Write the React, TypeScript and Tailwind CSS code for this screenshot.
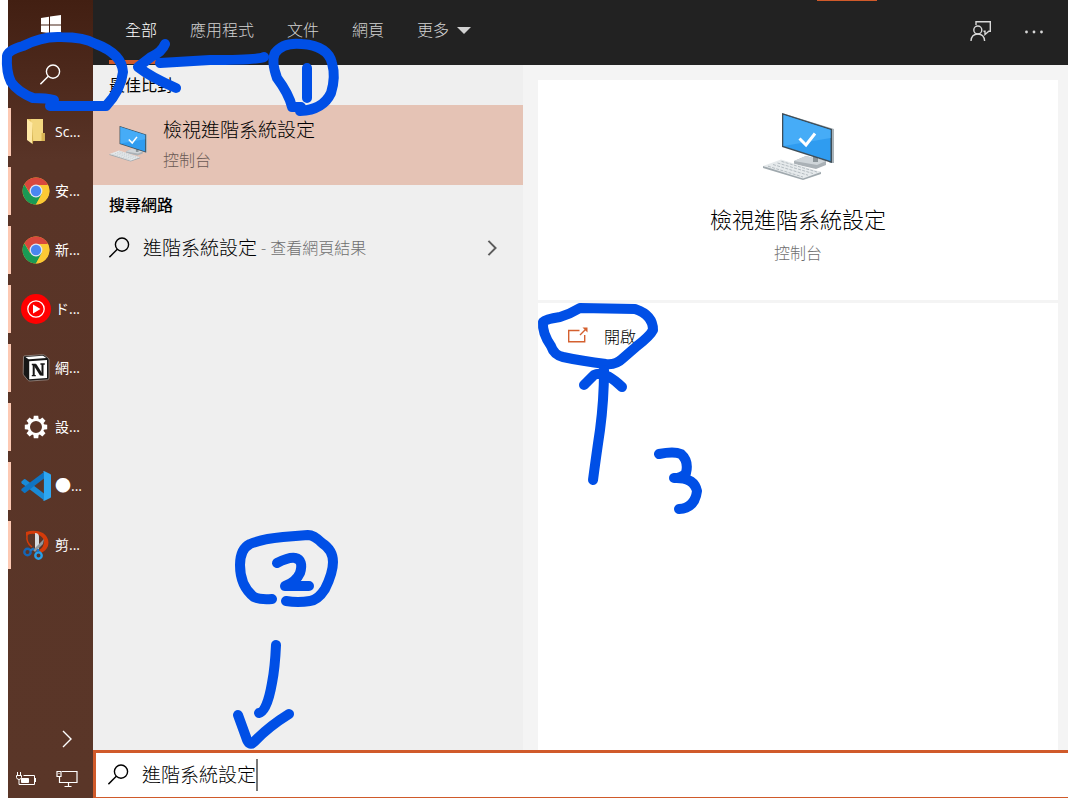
import React, { useState } from 'react';

type IconProps = { className?: string };

const WindowsIcon: React.FC<IconProps> = ({ className }) => (
  <svg viewBox="0 0 20 20" className={className} fill="#fff" aria-hidden="true">
    <path d="M0 3 8 1.8V9.4H0zM9 1.6 20 0v9.4H9zM0 10.4h8V18L0 16.9zM9 10.4h11V20L9 18.2z" />
  </svg>
);

const SearchIcon: React.FC<IconProps> = ({ className }) => (
  <svg viewBox="0 0 22 22" className={className} fill="none" stroke="currentColor" strokeWidth="1.4" aria-hidden="true">
    <circle cx="13" cy="7.6" r="6.6" />
    <path d="M8.300 12.300.4 20.200" />
  </svg>
);

const FolderIcon = () => (
  <svg viewBox="0 0 20 28" className="h-7 w-5" aria-hidden="true">
    <path d="M1 1h16v14h1.500v8H5z" fill="#e9c767" />
    <path d="M5 1h12v14h1.500v8H6z" fill="#f3d77f" />
    <path d="M15.500 15h3v8h-3z" fill="#d9b452" />
    <path d="M1 1l5.500 4v21L1 22z" fill="#ffe9a6" />
    <path d="M6.500 5 7.200 24 6 26.500z" fill="#d3b04f" />
  </svg>
);

const ChromeIcon = () => (
  <svg viewBox="0 0 48 48" className="h-7 w-7" aria-hidden="true">
    <circle cx="24" cy="24" r="23" fill="#fcc934" />
    <path d="M4.080 12.500A23 23 0 0 0 24 47L34 29.700 24 24 14 29.700z" fill="#1a9a55" />
    <path d="M24 13.500h20.400A23 23 0 0 1 24 47l9.500-17.500z" fill="#fcc934" />
    <path d="M24 13.500H44.400A23 23 0 0 0 4.080 12.500L14.500 29z" fill="#d9483d" />
    <circle cx="24" cy="24" r="11" fill="#dfe6f5" />
    <circle cx="24" cy="24" r="8.800" fill="#4a86f0" />
  </svg>
);

const MusicIcon = () => (
  <svg viewBox="0 0 30 30" className="h-[30px] w-[30px]" aria-hidden="true">
    <circle cx="15" cy="15" r="15" fill="#f00" />
    <circle cx="15" cy="15" r="8.200" fill="none" stroke="#fff" strokeWidth="1.300" />
    <path d="M12 10.500v9l7.500-4.500z" fill="#fff" />
  </svg>
);

const NotionIcon = () => (
  <svg viewBox="0 0 28 28" className="h-7 w-7" aria-hidden="true">
    <path d="M1.500 3Q1.500 2 2.500 1.900L20.500.7q1.200 0 2 .6L26 4q1 .8 1 2v18q0 1.700-1.700 1.800L8 27q-1.500 0-2.300-1L2 21.500q-.8-1-.8-2z" fill="#171717" stroke="#9b8d86" strokeWidth=".8" />
    <path d="M3.500 3 20.500 1.800q.8 0 1.300.4l2.400 1.700L7.500 5.200q-1 0-1.700-.5z" fill="#fff" />
    <path d="M7.200 7.200 25 6v18L7.200 25.200z" fill="#fff" />
    <path d="M11.700 10.500V21.500M20.500 10V21.500" stroke="#171717" strokeWidth="2" />
    <path d="M11 10.300h3.500l7 11.200h-3.500z" fill="#171717" />
    <path d="M9.800 10.500h4M18.400 10h4.400M9.800 21.700h4" stroke="#171717" strokeWidth="1.300" />
  </svg>
);

const GearIcon = () => (
  <svg viewBox="0 0 24 24" className="h-6 w-6" aria-hidden="true">
    <g fill="#fff">
      <path d="M9.800.8h4.400l.5 4H9.300z" />
      <path d="M9.800.8h4.400l.5 4H9.300z" transform="rotate(45 12 12)" />
      <path d="M9.800.8h4.400l.5 4H9.300z" transform="rotate(90 12 12)" />
      <path d="M9.800.8h4.400l.5 4H9.300z" transform="rotate(135 12 12)" />
      <path d="M9.800.8h4.400l.5 4H9.300z" transform="rotate(180 12 12)" />
      <path d="M9.800.8h4.400l.5 4H9.300z" transform="rotate(225 12 12)" />
      <path d="M9.800.8h4.400l.5 4H9.300z" transform="rotate(270 12 12)" />
      <path d="M9.800.8h4.400l.5 4H9.300z" transform="rotate(315 12 12)" />
    </g>
    <circle cx="12" cy="12" r="7.200" fill="none" stroke="#fff" strokeWidth="2.400" />
  </svg>
);

const CodeIcon = () => (
  <svg viewBox="0 0 30 30" className="h-[30px] w-[30px]" aria-hidden="true">
    <path d="M.5 10.500 3 8.300q.7-.4 1.400 0L23 22.500v6.700L.7 12.200q-.7-.7-.2-1.700z" fill="#1a8ad6" />
    <path d="M.5 19.500 3 21.700q.7.400 1.400 0L23 7.500V1L.7 17.800q-.7.800-.2 1.700z" fill="#0f74c2" />
    <path d="M22 .3q.8-.4 1.500 0l5.700 2.600q.8.500.8 1.400v21.400q0 .9-.8 1.400l-5.700 2.600q-.8.400-1.800-.3 1.200.2 1.200-1.200V1.800Q22.900.4 22 .3z" fill="#2ea7f2" />
  </svg>
);

const ScissorsIcon = () => (
  <svg viewBox="0 0 26 30" className="h-[30px] w-[26px]" aria-hidden="true">
    <path d="M3 2Q12-1 20 3q7 5 5 13-2 5-7 7l-2-3q5-3 5-8 0-5-6-7.500L12 4q-5-1-9 2z" fill="#d43b0a" />
    <path d="M4 5Q3 13 9 17" fill="none" stroke="#d43b0a" strokeWidth="1.500" />
    <path d="M12 3q4 0 4 4v13h-4z" fill="#d8dcdf" />
    <path d="M21 9l-1 5-8 8-2-2z" fill="#8f989e" />
    <circle cx="4.500" cy="22" r="3.200" fill="none" stroke="#1565b5" strokeWidth="2.400" />
    <circle cx="15.500" cy="25.500" r="3.200" fill="none" stroke="#28a0ea" strokeWidth="2.400" />
    <path d="M7 20.500 11 18.500M15 22v-3" stroke="#1c78c8" strokeWidth="2.400" />
  </svg>
);

const ComputerIcon: React.FC<IconProps> = ({ className }) => (
  <svg viewBox="0 0 72 68" className={className} aria-hidden="true">
    <path d="M32 48 44 43l20 5v4l-10 4-22-5z" fill="#aab1b6" />
    <path d="M32 48 44 43l20 5-9 4z" fill="#cfd5d9" />
    <path d="M51 42v7h5v-7z" fill="#8b9499" />
    <path d="M20 0 72 16v34L68 50z" fill="#a9b3b9" />
    <path d="M20 0 70 16v34L20 34z" fill="#3f4e58" />
    <path d="M21.500 2 68.500 17v31L21.500 33z" fill="#2f9cf0" />
    <path d="M21.500 2 68.500 17v8L21.500 33z" fill="#46acf7" />
    <path d="M37.500 25.500 44 32 53 20.500" fill="none" stroke="#fff" strokeWidth="3" />
    <path d="M1 53v2l40 12 18-6v-2z" fill="#a0a9ae" />
    <path d="M1 53 19 46.500 59 59l-18 6.500z" fill="#e6eaec" />
    <path d="M6 53.200 41 64M11 51.500 46 62.200M15.500 50 51 60.500M19.500 48.400 55 59" stroke="#b4bcc1" strokeWidth="1" strokeDasharray="3 1.300" />
  </svg>
);

const FeedbackIcon = () => (
  <svg viewBox="0 0 22 22" className="h-[22px] w-[22px]" fill="none" stroke="#d8d8d8" strokeWidth="1.400" aria-hidden="true">
    <path d="M6 4V.7h14.300v9.600h-1.500L15 13.500v-3.200h-1.500" />
    <circle cx="7.800" cy="9" r="4" />
    <path d="M1 20q.5-7 6.800-7t6.800 7" />
  </svg>
);

const OpenIcon = () => (
  <svg viewBox="0 0 20 20" className="h-5 w-5" fill="none" stroke="#d4602f" strokeWidth="1.400" aria-hidden="true">
    <path d="M11.500 3.500H.7v11.200h16V8M12 8 17.500 2.500" />
    <path d="M14.500.5h5v5z" fill="#d4602f" stroke="none" />
  </svg>
);

const ChevronIcon: React.FC<IconProps & { width?: number }> = ({ className, width = 1.4 }) => (
  <svg viewBox="0 0 10 18" className={className} fill="none" stroke="currentColor" strokeWidth={width} aria-hidden="true">
    <path d="M1 1l8 8-8 8" />
  </svg>
);

const PowerIcon = () => (
  <svg viewBox="0 0 20 14" className="h-3.5 w-5" fill="none" stroke="#fff" aria-hidden="true">
    <path d="M1.500 0v3M4.500 0v3M.5 3.500h5v2q-.5 2-2.500 2t-2.500-2zM3 7.500v5h15.500v-9H7.500M19.500 6v4" />
    <path d="M5.500 6.500h7v4h-7z" fill="#fff" />
  </svg>
);

const NetworkIcon = () => (
  <svg viewBox="0 0 22 18" className="h-[18px] w-[22px]" fill="none" stroke="#fff" strokeWidth="1.200" aria-hidden="true">
    <path d="M6 1.500h15v11H3.500V7M12.500 12.500v4M8.500 16.500h7M1 1.500h4v5H1zM2.500 3.500h1" />
  </svg>
);

const tasks = [
  { id: 'folder', label: 'Sc...', icon: <FolderIcon /> },
  { id: 'chrome', label: '安...', icon: <ChromeIcon /> },
  { id: 'chrome-new', label: '新...', icon: <ChromeIcon /> },
  { id: 'music', label: 'ド...', icon: <MusicIcon /> },
  { id: 'notion', label: '網...', icon: <NotionIcon /> },
  { id: 'settings', label: '設...', icon: <GearIcon /> },
  {
    id: 'code',
    label: (
      <>
        <span className="text-base leading-none">●</span>...
      </>
    ),
    icon: <CodeIcon />,
  },
  { id: 'snip', label: '剪...', icon: <ScissorsIcon /> },
];

const tabs = ['全部', '應用程式', '文件', '網頁'];

const Taskbar = () => (
  <aside className="flex w-[85px] shrink-0 flex-col bg-linear-to-b from-[#421f12] from-0% via-[#593427] via-20% to-[#5a3628]">
    <button className="flex h-[50px] items-center justify-center" aria-label="Start">
      <WindowsIcon className="h-5 w-5" />
    </button>
    <button className="flex h-[50px] items-center justify-center text-white" aria-label="Search">
      <SearchIcon className="h-[22px] w-[22px]" />
    </button>
    <nav className="mt-2 flex flex-col gap-[11px]">
      {tasks.map((task) => (
        <button key={task.id} className="flex h-12 items-center border-l-3 border-[#fdc9b3] text-sm font-normal text-white">
          <span className="ml-2 flex w-[34px] shrink-0 justify-center">{task.icon}</span>
          <span className="ml-0.5 whitespace-nowrap">{task.label}</span>
        </button>
      ))}
    </nav>
    <div className="mt-auto flex flex-col gap-[22px] pb-2.5 text-white">
      <button className="ml-[54px] w-2.5" aria-label="Show hidden icons">
        <ChevronIcon className="h-[18px] w-2.5" />
      </button>
      <div className="flex items-center gap-5 pl-2">
        <PowerIcon />
        <NetworkIcon />
      </div>
    </div>
  </aside>
);

// Hand-drawn steps laid over the window
const Annotations = () => (
  <svg
    className="pointer-events-none absolute top-0 left-0 h-[798px] w-[1068px]"
    viewBox="0 0 1068 798"
    fill="none"
    stroke="#004fe6"
    strokeWidth="10"
    strokeLinecap="round"
    strokeLinejoin="round"
    aria-hidden="true"
  >
    <path d="M54 100Q46 98 33 98Q18 92 11 82Q6 72 7 56Q8 50 23 46Q42 36 61 37Q84 37 96 44Q122 54 123 72Q121 90 106 106H50" />
    <path d="M264 57Q258 60 210 60L160 63M165 44Q162 52 151 57L138 67Q152 78 176 88" />
    <path d="M301 107H292Q289 94 277 78Q271 61 275 53Q283 42 302 44Q328 46 332 63Q336 77 331 93Q323 110 300 111M307 68V98" />
    <path d="M272 599Q260 600 254 597Q240 586 240 565Q240 549 250 544Q262 539 283 537L308 535Q314 535 322 543Q333 550 333 562Q333 573 325 589Q318 600 310 601Q298 603 286 601" />
    <path d="M277 563Q289 557 295 558Q304 560 300 573Q296 582 285 586H309" />
    <path d="M276 645Q275 668 272 683Q267 712 259 713M238 715 246 737Q249 747 254 742Q268 727 289 714" />
    <path d="M563 357Q554 355 551 346Q542 333 543 322Q546 319 560 317Q570 314 580 308L635 309Q653 315 653 330Q650 336 637 346L622 359Q616 365 606 364Q582 361 563 357" />
    <path d="M593 480Q596 457 600 430Q604 400 604 370M584 385 594 375Q604 370 622 387" />
    <path d="M659 454Q674 451 681 454Q689 461 686 473Q682 478 674 478Q694 477 697 491Q695 508 679 509" />
  </svg>
);

const App: React.FC = () => {
  const [query, setQuery] = useState('進階系統設定');

  return (
    <div className="relative flex h-screen overflow-hidden bg-white pl-2 font-['Open_Sans','Noto_Sans_CJK_TC',sans-serif] font-light text-black">
      <Taskbar />
      <div className="flex min-w-0 flex-1 flex-col">
        <header className="flex h-[65px] shrink-0 items-stretch justify-between bg-[#222] pr-6 pb-px pl-4 text-base text-[#d2d2d2]">
          <nav className="flex gap-px">
            {tabs.map((tab, i) => (
              <button
                key={tab}
                className={
                  i === 0
                    ? 'border-b-4 border-[#d05a2a] px-4 text-white'
                    : 'border-b-4 border-transparent px-4'
                }
              >
                {tab}
              </button>
            ))}
            <button className="flex items-center gap-2 border-b-4 border-transparent px-4">
              更多
              <svg viewBox="0 0 14 7" className="h-[7px] w-3.5" fill="currentColor" aria-hidden="true">
                <path d="M0 0h14L7 7z" />
              </svg>
            </button>
          </nav>
          <div className="mr-auto ml-[330px] h-px w-[60px] bg-[#d05a2a]" />
          <div className="flex items-center gap-8">
            <button aria-label="Feedback">
              <FeedbackIcon />
            </button>
            <button aria-label="Options">
              <svg viewBox="0 0 20 4" className="h-1 w-5" fill="#d8d8d8" aria-hidden="true">
                <circle cx="2.500" cy="2" r="1.400" />
                <circle cx="10" cy="2" r="1.400" />
                <circle cx="17.500" cy="2" r="1.400" />
              </svg>
            </button>
          </div>
        </header>

        <main className="flex min-h-0 flex-1">
          <section className="w-[430px] shrink-0 bg-[#efefef]">
            <h2 className="flex h-10 items-center px-4 text-base font-normal">最佳比對</h2>
            <button className="flex h-20 w-full items-center bg-[#e5c3b5] px-4 pb-0.5 text-left">
              <ComputerIcon className="h-9 w-[38px]" />
              <span className="ml-4 flex flex-col gap-1">
                <span className="text-[19px] leading-7">檢視進階系統設定</span>
                <span className="text-base leading-6 text-[#6a5a54]">控制台</span>
              </span>
            </button>
            <h2 className="flex h-10 items-center px-4 text-base font-medium">搜尋網路</h2>
            <button className="flex h-12 w-full items-center px-4 pb-0.5 text-left">
              <SearchIcon className="h-[22px] w-[22px]" />
              <span className="ml-3 text-[19px]">進階系統設定</span>
              <span className="ml-1 text-base text-[#6e6e6e]">- 查看網頁結果</span>
              <ChevronIcon className="mr-2.5 ml-auto h-4 w-2.5 text-[#5c5c5c]" width={2.2} />
            </button>
          </section>

          <section className="flex min-w-0 flex-1 flex-col bg-[#f4f4f4] pt-[15px] pr-2.5 pl-[15px]">
            <div className="flex h-[220px] flex-col items-center bg-white pt-[33px]">
              <ComputerIcon className="h-[68px] w-[72px]" />
              <h1 className="mt-[22px] text-[22px] leading-8">檢視進階系統設定</h1>
              <p className="mt-1.5 text-base leading-6 text-[#6e6e6e]">控制台</p>
            </div>
            <div className="mt-[3px] flex-1 bg-white pt-4">
              <button className="flex h-9 w-full items-center gap-4 px-[30px] text-base">
                <OpenIcon />
                開啟
              </button>
            </div>
          </section>
        </main>

        <div className="flex h-12 shrink-0 items-center border-t-3 border-b border-l-3 border-[#d05a2a] bg-white pl-3">
          <label htmlFor="search-box" aria-label="搜尋">
            <SearchIcon className="h-[22px] w-[22px]" />
          </label>
          <input
            id="search-box"
            aria-label="搜尋"
            value={query}
            onChange={(e) => setQuery(e.target.value)}
            className="ml-3 w-[116px] border-r-2 border-[#777] text-[19px] leading-8 outline-none"
          />
        </div>
      </div>
      <Annotations />
    </div>
  );
};

export default App;
